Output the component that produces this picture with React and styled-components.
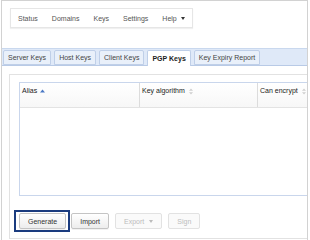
import React from 'react';
import styled, { createGlobalStyle } from 'styled-components';

const GlobalStyle = createGlobalStyle`
  html, body {
    margin: 0;
    padding: 0;
    background: #ffffff;
    overflow: hidden;
  }
  body {
    font-family: "Liberation Sans", Arial, sans-serif;
    font-size: 7px;
    color: #333333;
  }
`;

const NAV_ITEMS = ['Status', 'Domains', 'Keys', 'Settings', 'Help'];
const TABS = ['Server Keys', 'Host Keys', 'Client Keys', 'PGP Keys', 'Key Expiry Report'];

const COLUMNS = [
  { label: 'Alias', width: 119, sort: 'asc' },
  { label: 'Key algorithm', width: 118, sort: 'none' },
  { label: 'Can encrypt', width: 60, sort: 'none' },
];

const SortIcon = ({ sort }) => {
  if (sort === 'asc') {
    return (
      <svg width="5" height="4" viewBox="0 0 5 4">
        <path d="M0 3.5 L2.5 0.5 L5 3.5 Z" fill="#4a78c4" />
      </svg>
    );
  }
  return (
    <svg width="4" height="7" viewBox="0 0 4 7">
      <path d="M0 2.8 L2 0.6 L4 2.8 Z" fill="#cfcfcf" />
      <path d="M0 4.2 L2 6.4 L4 4.2 Z" fill="#cfcfcf" />
    </svg>
  );
};

const App = () => {
  return (
    <>
      <GlobalStyle />
      <Frame>
        <NavRow>
          <Nav>
            {NAV_ITEMS.map((item) => (
              <NavItem key={item}>
                {item}
                {item === 'Help' && <Caret />}
              </NavItem>
            ))}
          </Nav>
        </NavRow>
        <TabBar>
          {TABS.map((tab) => (
            <Tab key={tab} active={tab === 'PGP Keys'}>
              {tab}
            </Tab>
          ))}
        </TabBar>
        <Panel>
          <Table>
            <HeaderRow>
              {COLUMNS.map((col) => (
                <HeaderCell key={col.label} style={{ width: col.width }}>
                  {col.label}
                  <SortSlot wide={col.sort === 'asc'}>
                    <SortIcon sort={col.sort} />
                  </SortSlot>
                </HeaderCell>
              ))}
            </HeaderRow>
          </Table>
          <ButtonRow>
            <FocusRing>
              <Button>Generate</Button>
            </FocusRing>
            <Button>Import</Button>
            <Button disabled>
              Export
              <Caret disabled />
            </Button>
            <Button disabled>Sign</Button>
          </ButtonRow>
        </Panel>
      </Frame>
    </>
  );
};

const Frame = styled.div`
  margin-left: 1px;
  width: 305px;
  height: 239px;
  overflow: hidden;
  border: 1px solid #d2d2d2;
  border-bottom: none;
  display: flex;
  flex-direction: column;
`;

const NavRow = styled.div`
  display: flex;
  padding: 7px 0 0 8px;
`;

const Nav = styled.ul`
  display: flex;
  align-items: center;
  margin: 0;
  padding: 0;
  list-style: none;
  height: 18px;
  border: 1px solid #e6e6e6;
  box-shadow: 0 1px 1px rgba(0, 0, 0, 0.06);
  background: #ffffff;
`;

const NavItem = styled.li`
  display: flex;
  align-items: center;
  gap: 4px;
  padding: 0 7px;
  color: #555555;
`;

const Caret = styled.span`
  display: inline-block;
  width: 0;
  height: 0;
  border-left: 2.5px solid transparent;
  border-right: 2.5px solid transparent;
  border-top: 3px solid ${(p) => (p.disabled ? '#bbbbbb' : '#333333')};
`;

const TabBar = styled.div`
  display: flex;
  align-items: flex-end;
  gap: 3px;
  margin-top: 20px;
  height: 16px;
  padding-left: 1px;
  background: #dfe9f8;
  border-top: 1px solid #c9d8ee;
  border-bottom: 1px solid #b8cae6;
  flex-shrink: 0;
`;

const Tab = styled.div`
  display: flex;
  align-items: center;
  box-sizing: border-box;
  height: ${(p) => (p.active ? '16px' : '15px')};
  margin-bottom: ${(p) => (p.active ? '-1px' : '0')};
  padding: 0 4px;
  border: 1px solid #bfcfe8;
  border-bottom: ${(p) => (p.active ? 'none' : '1px solid #bfcfe8')};
  border-radius: 2px 2px 0 0;
  background: ${(p) => (p.active ? '#ffffff' : '#e9f0fa')};
  font-weight: ${(p) => (p.active ? 700 : 400)};
  color: ${(p) => (p.active ? '#222222' : '#444444')};
  white-space: nowrap;
`;

const Panel = styled.div`
  margin: 8px 0 0 7px;
  padding: 7px 0 6px 9px;
  border: 1px solid #e2e2e2;
  border-right: none;
  display: flex;
  flex-direction: column;
  flex-shrink: 0;
`;

const Table = styled.div`
  width: 300px;
  height: 112px;
  border: 1px solid #c9d6ec;
  border-right: none;
  background: #ffffff;
`;

const HeaderRow = styled.div`
  display: flex;
  height: 24px;
  border-bottom: 1px solid #e3e3e3;
  background: linear-gradient(#ffffff, #f7f7f7);
`;

const HeaderCell = styled.div`
  display: flex;
  align-items: flex-start;
  box-sizing: border-box;
  padding: 4px 2px 0 2px;
  border-left: 1px solid #dcdcdc;
  color: #222222;
  white-space: nowrap;
  flex-shrink: 0;

  &:first-child {
    border-left: none;
  }
`;

const SortSlot = styled.span`
  display: flex;
  margin-left: ${(p) => (p.wide ? '3px' : '4px')};
  margin-top: ${(p) => (p.wide ? '2px' : '0.5px')};
`;

const ButtonRow = styled.div`
  display: flex;
  align-items: center;
  gap: 6px;
  margin-top: 14px;
`;

const FocusRing = styled.div`
  display: flex;
  padding: 1px 2px 1px 3px;
  margin-left: -5px;
  margin-right: -5px;
  border: 2px solid #1b3c7f;
`;

const Button = styled.button`
  display: flex;
  align-items: center;
  gap: 5px;
  height: 16px;
  padding: 0 8px;
  font-family: inherit;
  font-size: 7px;
  border-radius: 2px;
  border: 1px solid ${(p) => (p.disabled ? '#e2e2e2' : '#c4c4c4')};
  background: ${(p) =>
    p.disabled ? '#fafafa' : 'linear-gradient(#ffffff, #ededed)'};
  color: ${(p) => (p.disabled ? '#bcbcbc' : '#333333')};
  box-shadow: ${(p) => (p.disabled ? 'none' : '0 1px 0 rgba(0,0,0,0.05)')};
`;

export default App;
